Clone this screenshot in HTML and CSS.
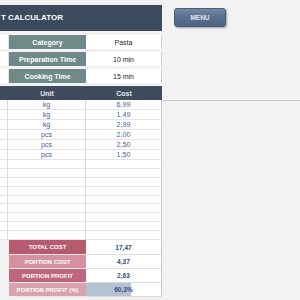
FILE: index.html
```html
<!DOCTYPE html>
<html>
<head>
<meta charset="utf-8">
<link rel="stylesheet" href="styles.css">
</head>
<body>
<div class="page">
  <div class="sheet">
    <div class="title">T CALCULATOR</div>
    <div class="info">
      <div class="blank"></div><div class="label">Category</div><div class="val">Pasta</div>
      <div class="blank"></div><div class="label">Preparation Time</div><div class="val">10 min</div>
      <div class="blank"></div><div class="label">Cooking Time</div><div class="val">15 min</div>
    </div>
    <div class="head">
      <div></div><div>Unit</div><div>Cost</div>
    </div>
    <div class="data">
      <div class="c0"></div><div class="c1">kg</div><div class="c2">6,99</div>
      <div class="c0"></div><div class="c1">kg</div><div class="c2">1,49</div>
      <div class="c0"></div><div class="c1">kg</div><div class="c2">2,99</div>
      <div class="c0"></div><div class="c1">pcs</div><div class="c2">2,00</div>
      <div class="c0"></div><div class="c1">pcs</div><div class="c2">2,50</div>
      <div class="c0"></div><div class="c1">pcs</div><div class="c2">1,50</div>
      <div class="c0"></div><div class="c1"></div><div class="c2"></div>
      <div class="c0"></div><div class="c1"></div><div class="c2"></div>
      <div class="c0"></div><div class="c1"></div><div class="c2"></div>
      <div class="c0"></div><div class="c1"></div><div class="c2"></div>
      <div class="c0"></div><div class="c1"></div><div class="c2"></div>
      <div class="c0"></div><div class="c1"></div><div class="c2"></div>
      <div class="c0"></div><div class="c1"></div><div class="c2"></div>
      <div class="c0"></div><div class="c1"></div><div class="c2"></div>
      <div class="c0"></div><div class="c1"></div><div class="c2"></div>
    </div>
    <div class="totals">
      <div></div><div class="tl dark">TOTAL COST</div><div class="tv">17,47</div>
      <div></div><div class="tl light">PORTION COST</div><div class="tv">4,37</div>
      <div></div><div class="tl dark2">PORTION PROFIT</div><div class="tv">2,63</div>
      <div></div><div class="tl light2">PORTION PROFIT (%)</div><div class="tv bar" style="--pct:60.3%">60,3%</div>
    </div>
  </div>
  <div class="side">
    <div class="side-top">
      <button class="menu">MENU</button>
    </div>
  </div>
</div>
</body>
</html>
```
FILE: styles.css
```css
* { box-sizing: border-box; }
html, body { margin: 0; padding: 0; }
body {
  background: #f2f2f2;
  font-family: "Liberation Sans Narrow", "Liberation Sans", Arial, sans-serif;
  width: 300px;
  height: 300px;
  overflow: hidden;
}
.page { display: flex; }
.sheet { width: 162px; padding-top: 5px; flex: none; }
.title {
  height: 26px;
  background: #3b4a5c;
  color: #fff;
  font-weight: bold;
  font-size: 8px;
  line-height: 26px;
  padding-left: 1px;
  white-space: nowrap;
  margin-bottom: 4px;
}
.info {
  display: grid;
  grid-template-columns: 9px 77px 76px;
  grid-auto-rows: 14px;
  row-gap: 3px;
  margin-bottom: 3px;
}
.info .blank { background: #fff; border-right: 1px solid #e2e2e2; }
.info .label {
  background: #6f8a88;
  color: #fff;
  font-weight: bold;
  font-size: 7px;
  display: flex; align-items: center; justify-content: center;
}
.info .val {
  background: #fff;
  color: #1e1e1e;
  font-size: 7px;
  display: flex; align-items: center; justify-content: center;
  border-right: 1px solid #cfcfcf;
}
.head {
  display: grid;
  grid-template-columns: 8px 78px 76px;
  height: 14px;
  background: #3e4c5e;
  color: #e6e9ec;
  font-size: 7px;
  font-weight: bold;
}
.head div { display: flex; align-items: center; justify-content: center; }
.data {
  display: grid;
  grid-template-columns: 8px 78px 76px;
  grid-template-rows: repeat(15, 1fr);
  height: 140px;
  background: #fff;
  color: #44639a;
  font-size: 7.2px;
}
.data div {
  border-bottom: 1px solid #e4e4e4;
  display: flex; align-items: center; justify-content: center;
}
.data .c0, .data .c1 { border-right: 1px solid #dadada; }
.data .c2 { border-right: 1px solid #c9c9c9; }
.totals {
  display: grid;
  grid-template-columns: 9px 77px 76px;
  grid-template-rows: 15px 14px 14px 14px;
}
.totals .tl {
  color: #fff;
  font-weight: bold;
  font-size: 6px;
  display: flex; align-items: center; justify-content: center;
  border-bottom: 1px solid #f2e6e9;
}
.tl.dark { background: #b65a70; }
.tl.light { background: #d4919f; }
.tl.dark2 { background: #be667b; }
.tl.light2 { background: #d9a2ae; }
.totals .tv {
  background: #fff;
  color: #2f4f80;
  font-weight: bold;
  font-size: 6.6px;
  display: flex; align-items: center; justify-content: center;
  border-bottom: 1px solid #dcdcdc;
  border-right: 1px solid #c9c9c9;
}
.totals .tv.bar {
  background: linear-gradient(to right, #b6c2d2 var(--pct), #fff var(--pct));
}
.side { flex: 1; }
.side-top {
  height: 101px;
  border-bottom: 1px solid #c9c9c9;
  padding: 8px 0 0 12px;
}
.menu {
  display: block;
  width: 52px;
  height: 19px;
  border: 1px solid #4a5b73;
  border-radius: 3px;
  background: linear-gradient(to bottom, #7288a6 0%, #5a7090 45%, #4e6483 100%);
  box-shadow: 1px 1px 2px rgba(0,0,0,0.35);
  color: #e6e9ee;
  font-family: "Liberation Sans", Arial, sans-serif;
  font-weight: bold;
  font-size: 6.5px;
  padding: 0;
  margin: 0;
}
```
